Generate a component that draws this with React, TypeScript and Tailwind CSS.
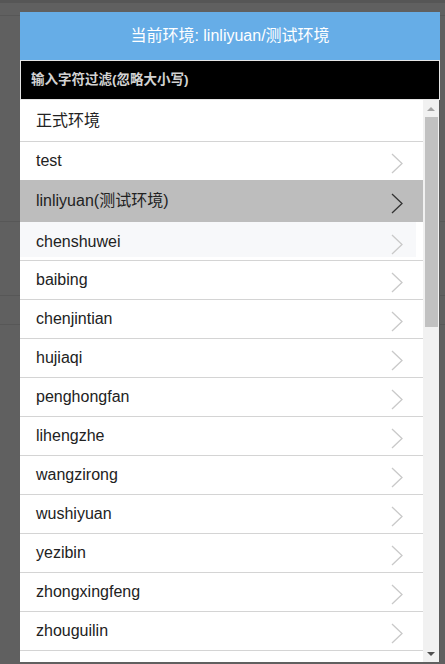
import React from "react";

const envs = [
  "chenshuwei",
  "baibing",
  "chenjintian",
  "hujiaqi",
  "penghongfan",
  "lihengzhe",
  "wangzirong",
  "wushiyuan",
  "yezibin",
  "zhongxingfeng",
  "zhouguilin",
];

const font = {
  fontFamily: '"Liberation Sans", Arial, "Noto Sans CJK SC", sans-serif',
};

function Chevron({ dark }: { dark?: boolean }) {
  return (
    <svg width="12" height="21" viewBox="0 0 12 21" className="shrink-0 mt-[4px]">
      <path
        d="M1 1 L11 10.5 L1 20"
        fill="none"
        stroke={dark ? "#333333" : "#c9c9c9"}
        strokeWidth="1.3"
      />
    </svg>
  );
}

export default function App() {
  return (
    <div className="relative w-[445px] h-[664px] overflow-hidden bg-[#606060]" style={font}>
      {/* dimmed page behind the dialog */}
      <div className="h-[3px] bg-[#565656]" />
      <div className="h-[13px] border-b border-[#575757]" />
      <div className="h-[206px] border-b border-[#575757]" />
      <div className="h-[74px] border-b border-[#575757]" />
      <div className="h-[29px] border-b border-[#575757]" />

      {/* dialog */}
      <div className="absolute left-[20px] top-[12px] w-[420px] h-[650px] flex flex-col bg-white">
        <div className="h-[48px] shrink-0 bg-[#66ade7] flex items-center justify-center text-white text-[16px]">
          当前环境: linliyuan/测试环境
        </div>
        <div className="h-[40px] shrink-0 bg-black border border-[#e6e6e6] flex items-center pl-[10px]">
          <span className="text-[13.5px] font-bold text-[#d2d2d2]">输入字符过滤(忽略大小写)</span>
        </div>

        <div className="flex flex-1 min-h-0">
          <div className="w-[403px] overflow-hidden text-[16px] text-[#222]">
            <div className="h-[42px] border-b border-[#d4d4d4] flex items-center pl-[16px]">正式环境</div>
            <div className="h-[38px] flex items-center justify-between pl-[16px] pr-[20px]">
              <span>test</span>
              <Chevron />
            </div>
            <div className="h-[42px] bg-[#bdbdbd] flex items-center justify-between pl-[16px] pr-[20px]">
              <span>linliyuan(测试环境)</span>
              <Chevron dark />
            </div>
            {envs.map((name, i) => (
              <div key={name} className="h-[39px] border-b border-[#d4d4d4] bg-white">
                <div
                  className={
                    i === 0
                      ? "h-[35px] mr-[7px] bg-[#f7f8fa] flex items-center justify-between pl-[16px] pr-[13px] pt-[5px]"
                      : "h-[38px] flex items-center justify-between pl-[16px] pr-[20px]"
                  }
                >
                  <span>{name}</span>
                  <Chevron />
                </div>
              </div>
            ))}
          </div>

          {/* scrollbar */}
          <div className="w-[16px] bg-[#f1f1f1] flex flex-col items-stretch">
            <div className="h-[17px] flex items-center justify-center">
              <div className="w-0 h-0 border-l-[4px] border-r-[4px] border-b-[4px] border-l-transparent border-r-transparent border-b-[#a3a3a3]" />
            </div>
            <div className="h-[210px] ml-[2px] mr-[1px] bg-[#c1c1c1]" />
            <div className="flex-1" />
            <div className="h-[17px] flex items-center justify-center">
              <div className="w-0 h-0 border-l-[4px] border-r-[4px] border-t-[4px] border-l-transparent border-r-transparent border-t-[#505050]" />
            </div>
          </div>
          <div className="w-[1px] bg-[#5a5a5a]" />
        </div>
      </div>
    </div>
  );
}
